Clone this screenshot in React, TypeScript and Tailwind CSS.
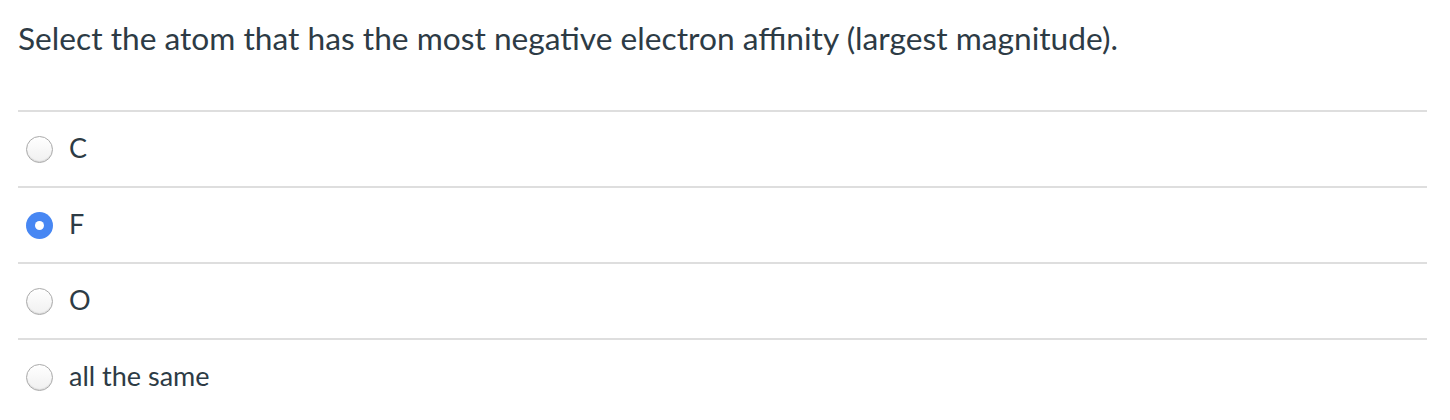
import React from "react";

const options = [
  { label: "C", checked: false },
  { label: "F", checked: true },
  { label: "O", checked: false },
  { label: "all the same", checked: false },
];

function Radio({ checked }: { checked: boolean }) {
  if (checked) {
    return (
      <span className="flex h-[27px] w-[27px] shrink-0 items-center justify-center rounded-full bg-[#4787f3]">
        <span className="h-[9px] w-[9px] rounded-full bg-white" />
      </span>
    );
  }
  return (
    <span className="h-[27px] w-[27px] shrink-0 rounded-full border border-[#aaaaaa] bg-gradient-to-b from-[#ffffff] to-[#f0f0f0] shadow-[inset_0_-1px_1px_rgba(0,0,0,0.1)]" />
  );
}

export default function App() {
  return (
    <div className="min-h-[420px] bg-white pl-[18px] pr-[23px] pt-[16px] font-['Lato','Liberation_Sans',sans-serif] text-[#2d3b45]">
      <h1 className="text-[31.7px] leading-[44px] font-normal">
        Select the atom that has the most negative electron affinity (largest magnitude).
      </h1>
      <div className="mt-[50px]">
        {options.map((o) => (
          <div
            key={o.label}
            className="flex h-[76px] items-center gap-[16px] border-t-2 border-[#dedede] pl-[8px]"
          >
            <Radio checked={o.checked} />
            <span className="pb-[4px] text-[27px] leading-none">{o.label}</span>
          </div>
        ))}
      </div>
    </div>
  );
}
